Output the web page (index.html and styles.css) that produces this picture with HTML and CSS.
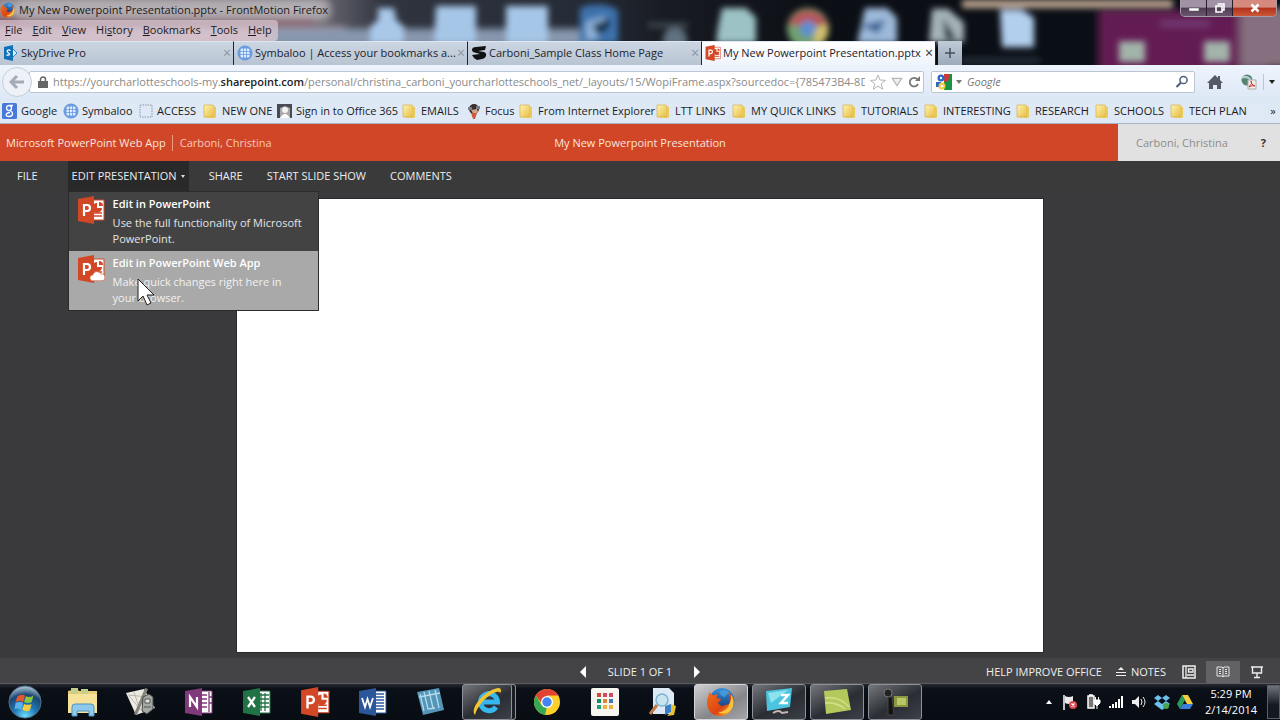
FILE: index.html
```html
<!DOCTYPE html>
<html lang="en">
<head>
<meta charset="utf-8">
<title>My New Powerpoint Presentation.pptx - FrontMotion Firefox</title>
<link rel="stylesheet" href="styles.css">
</head>
<body>
<svg class="sprite" aria-hidden="true">
  <defs>
    <linearGradient id="gFold" x1="0" y1="0" x2="1" y2="1"><stop offset="0" stop-color="#fff3ad"/><stop offset="1" stop-color="#e6bd45"/></linearGradient>
    <linearGradient id="gGlobe" x1="0" y1="0" x2="0" y2="1"><stop offset="0" stop-color="#3c8fd8"/><stop offset="1" stop-color="#0c2f6e"/></linearGradient>
    <linearGradient id="gFox" x1="0" y1="0" x2="1" y2="1"><stop offset="0" stop-color="#f2701c"/><stop offset=".6" stop-color="#dc4412"/><stop offset="1" stop-color="#ffc93a"/></linearGradient>
    <radialGradient id="gOrb" cx=".5" cy=".95" r=".9"><stop offset="0" stop-color="#6fe0ff"/><stop offset=".4" stop-color="#1f78b6"/><stop offset=".75" stop-color="#1c4670"/><stop offset="1" stop-color="#9bb8cc"/></radialGradient>
  </defs>
  <symbol id="folder" viewBox="0 0 16 16"><path d="M1 2h9l1 1v11H1z" fill="url(#gFold)" stroke="#d5b04a" stroke-width=".7"/><path d="M10.500 4H13v10l-1 1H4l-1-1h7.500z" fill="#e9c95d"/></symbol>
  <symbol id="symbaloo" viewBox="0 0 16 16"><circle cx="8" cy="8" r="7.6" fill="#6c9ce0"/><rect x="3.5" y="3.5" width="9" height="9" rx="1.500" fill="#dcebff"/><path d="M6.500 3v10M9.500 3v10M3 6.500h10M3 9.500h10" stroke="#6c9ce0" stroke-width=".8"/></symbol>
  <symbol id="firefox" viewBox="0 0 32 32"><circle cx="17" cy="14" r="13" fill="url(#gGlobe)"/><path d="M14 5c4-3 9-2 12 2l-4 1-2 3-4-2z" fill="#4aa5e2" opacity=".7"/><path d="M4 5c1 2 2 3 4 4 2-1 4-1 5-1-2 2-2 3-1 4l4 1c0 2-3 2-3 4 1 3 5 4 8 2 3 0 3-1 4-2 1-5 0-9-2-12 5 3 7 8 6 13-1 8-7 13-14 13C7 31 1 25 1 17 1 12 3 8 4 5z" fill="url(#gFox)"/><path d="M27 8c4 6 3 14-2 18-4 3-9 3-12 1 8 0 14-7 14-19z" fill="#ffc43a"/></symbol>
  <symbol id="ppt" viewBox="0 0 28 28"><path d="M15 4h12v20H15z" fill="#fff" stroke="#d24726"/><path d="M20 7v5h5a5 5 0 1 1-5-5z" fill="#d24726"/><path d="M22 6a4 4 0 0 1 4 4h-4z" fill="#d24726"/><path d="M17 17h8M17 20h8" stroke="#d24726" stroke-width="1.500"/><path d="M1 3l16-3v28L1 25z" fill="#d24726"/><path d="M7 20V9h3a3 3 0 0 1 0 6H7" fill="none" stroke="#fff" stroke-width="2.200"/></symbol>
  <symbol id="cloud" viewBox="0 0 18 12"><path d="M4 11a3 3 0 0 1 0-6 4.500 4.500 0 0 1 8.500-1A3.500 3.500 0 0 1 14 11z" fill="#fff" stroke="#d8663f" stroke-width=".7"/></symbol>
</svg>

<header class="window-top">
  <svg class="wallpaper" viewBox="0 0 1280 66" preserveAspectRatio="none" aria-hidden="true">
    <defs>
      <filter id="soft" x="-20%" y="-20%" width="140%" height="140%"><feGaussianBlur stdDeviation="4"/></filter>
      <filter id="soft2" x="-20%" y="-20%" width="140%" height="140%"><feGaussianBlur stdDeviation="3"/></filter>
      <linearGradient id="wall"><stop offset="0" stop-color="#8d7f85"/><stop offset=".24" stop-color="#77747e"/><stop offset=".3" stop-color="#30343e"/><stop offset=".46" stop-color="#242b36"/><stop offset=".52" stop-color="#191b22"/><stop offset=".64" stop-color="#0c0f15"/><stop offset="1" stop-color="#090e16"/></linearGradient>
    </defs>
    <rect width="1280" height="66" fill="url(#wall)"/>
    <g filter="url(#soft)">
      <rect x="-5" y="15" width="320" height="12" fill="#7b3a51" opacity=".65"/>
      <rect x="-5" y="27" width="350" height="18" fill="#b9a0ac"/>
      <rect x="0" y="2" width="325" height="14" fill="#aaa6a9"/>
      <rect x="270" y="29" width="320" height="18" fill="#8797ad"/>
      <rect x="1098" y="10" width="170" height="65" fill="#641d52"/>
      <rect x="1240" y="8" width="50" height="60" fill="#86707f"/>
    </g>
    <g filter="url(#soft2)">
      <path d="M378 8h16l2 12 8 8v16h-34V28l8-8z" fill="#a9c8e9"/>
      <path d="M436 6h40v38h-42z" fill="#a6c6e8"/><path d="M506 6h42v38h-42z" fill="#a6c6e8"/>
      <path d="M580 8q20-8 38 2v34h-38z" fill="#3d72ad"/><path d="M586 22l20-6-8 24h-12z" fill="#8fb4da"/><path d="M592 26l18-8v10l-12 8z" fill="#17304e"/>
      <path d="M648 23h40v5h-40z" fill="#3f4c53"/><circle cx="675" cy="40" r="12" fill="#60717f"/>
      <path d="M722 8h24l10 10v26h-40l2-16z" fill="#9cc2c6"/>
      <circle cx="808" cy="29" r="21" fill="#72a071"/><path d="M788 25a21 21 0 0 1 40 0l-20 2z" fill="#b65559"/><path d="M812 29l16-4c1 12-4 18-12 22z" fill="#d3c16a"/><circle cx="808" cy="29" r="8" fill="#5d8ed1"/>
      <path d="M865 8h22l10 10v26h-40z" fill="#9db9da"/><path d="M860 26l26-6-8 14z" fill="#3e6495"/>
      <path d="M932 9h16l16 14v20h-35z" fill="#a5b4b8"/><path d="M943 18l14 22h-12z" fill="#253642"/>
      <path d="M1000 10h22l12 8v30h-32z" fill="#b2cfee"/>
      <path d="M962 0h211v8H962z" fill="#c0a893"/>
      <path d="M1160 20h50v8h-50z" fill="#70376f"/>
      <path d="M1119 42h26v21h-26zM1204 42h26v21h-26z" fill="#a3b4aa"/>
      <path d="M960 59h80v5h-80z" fill="#2c3640"/>
    </g>
  </svg>
  <div class="title-row">
    <svg class="i16"><use href="#firefox"/></svg>
    <span class="glow">My New Powerpoint Presentation.pptx - FrontMotion Firefox</span>
    <div class="win-controls">
      <button aria-label="Minimize"><svg viewBox="0 0 16 12"><path d="M3 6h10v3H3z" fill="#fff" stroke="#555" stroke-width=".5"/></svg></button>
      <button aria-label="Restore"><svg viewBox="0 0 16 12"><path d="M5.500 2h6.500v6H10M4 4h6v6H4z" fill="none" stroke="#fff" stroke-width="1.600"/></svg></button>
      <button class="close" aria-label="Close"><svg viewBox="0 0 16 12"><path d="M4.500 2.500l7 7m0-7l-7 7" stroke="#fff" stroke-width="2.500"/></svg></button>
    </div>
  </div>
  <nav class="menu-row">
    <button><u>F</u>ile</button><button><u>E</u>dit</button><button><u>V</u>iew</button><button>Hi<u>s</u>tory</button><button><u>B</u>ookmarks</button><button><u>T</u>ools</button><button><u>H</u>elp</button>
  </nav>
  <div class="tabs" role="tablist">
    <button class="tab" role="tab"><svg class="i16" viewBox="0 0 16 16"><path d="M10 4l4 4-4 4" fill="#d9ecf8" stroke="#2b88c9"/><path d="M1 2l9-2v16l-9-2z" fill="#0f72b8"/><path d="M7.500 5.500C5 4 3 6 5 7.500s2.500 3-1.500 2.500" fill="none" stroke="#fff" stroke-width="1.300"/></svg><span>SkyDrive Pro</span><i>×</i></button>
    <button class="tab" role="tab"><svg class="i16"><use href="#symbaloo"/></svg><span>Symbaloo | Access your bookmarks a...</span><i>×</i></button>
    <button class="tab" role="tab"><svg class="i16" viewBox="0 0 16 16"><path d="M15 1L5 2C1 2 0 5 2 7l7 2-8 1 2 3 3 2 5-1c4-1 6-5 2-7L7 6l7-1z" fill="#111"/></svg><span>Carboni_Sample Class Home Page</span><i>×</i></button>
    <button class="tab active" role="tab" aria-selected="true"><svg class="i16"><use href="#ppt"/></svg><span>My New Powerpoint Presentation.pptx</span><i>×</i></button>
    <button class="new-tab" aria-label="New tab"><svg viewBox="0 0 12 12"><path d="M6 1v10M1 6h10" stroke="#44505f" stroke-width="1.500"/></svg></button>
  </div>
</header>

<div class="nav-bar">
  <button class="back" aria-label="Back"><svg viewBox="0 0 16 16"><path d="M8 2L2 8l6 6M2.500 8H15" fill="none" stroke="#a4abb4" stroke-width="3"/></svg></button>
  <div class="address">
    <svg class="lock" viewBox="0 0 10 12"><path d="M2.500 6V3.500a2.500 2.500 0 0 1 5 0V6" fill="none" stroke="#666" stroke-width="1.500"/><path d="M0 5h10v7H0z" fill="#666"/></svg>
    <div class="url" role="textbox" aria-label="Address" contenteditable="true" spellcheck="false">https://yourcharlotteschools-my.<b>sharepoint.com</b>/personal/christina_carboni_yourcharlotteschools_net/_layouts/15/WopiFrame.aspx?sourcedoc={785473B4-8DEE-47</div>
    <button aria-label="Bookmark"><svg class="i16" viewBox="0 0 16 16"><path d="M8 1l2 5 5.500.4-4.300 3.500 1.500 5.300L8 12.200l-4.700 3 1.500-5.300L.5 6.400 6 6z" fill="#fff" stroke="#b4b4b4"/></svg></button>
    <button aria-label="History"><svg viewBox="0 0 10 10"><path d="M1 2h8L5 8z" fill="#eee" stroke="#b8b8b8"/></svg></button>
    <button aria-label="Reload"><svg viewBox="0 0 12 12"><path d="M9.500 3.500A4.300 4.300 0 1 0 10 8" fill="none" stroke="#777" stroke-width="1.800"/><path d="M7 5h5V0z" fill="#777"/></svg></button>
  </div>
  <div class="search">
    <svg class="i16" viewBox="0 0 16 16"><path d="M8 0h8v16H8z" fill="#159447"/><path d="M8 0h6l-2 7-4 1z" fill="#d63632"/><circle cx="5" cy="4" r="3.500" fill="#2969c5"/><circle cx="5" cy="4" r="1.200" fill="#fff"/><path d="M0 8h5v5H0z" fill="#2969c5"/><circle cx="6" cy="12" r="3.500" fill="#f3c63d"/><circle cx="6" cy="12" r="1.500" fill="#fff"/></svg>
    <svg class="tiny" viewBox="0 0 6 4"><path d="M0 0h6L3 4z" fill="#777"/></svg>
    <input type="search" placeholder="Google" aria-label="Search with Google">
    <button aria-label="Search"><svg class="i16" viewBox="0 0 16 16"><circle cx="9.500" cy="6" r="3.600" fill="#fff" stroke="#50627a" stroke-width="1.500"/><path d="M7 8.500L2.500 13" stroke="#50627a" stroke-width="2.200"/></svg></button>
  </div>
  <button class="tool" aria-label="Home"><svg class="i16" viewBox="0 0 16 16"><path d="M8 1L0 9h2v6h4v-4h4v4h4V9h2l-3-3V2h-2v2z" fill="#535b66"/></svg></button>
  <button class="tool" aria-label="Convert page"><svg class="i16" viewBox="0 0 16 16"><circle cx="6" cy="6" r="5.500" fill="#55866d"/><path d="M1 4q4-3 9 2" stroke="#b7ccd5" stroke-width="2" fill="none"/><path d="M7 6h8v9H7z" fill="#f5efee" stroke="#aaa"/><path d="M8 13q4-4 2-6 0 4 4 5-3-1-6 1" fill="none" stroke="#c23b36"/></svg></button>
  <button class="more" aria-label="More"><svg class="tiny" viewBox="0 0 6 4"><path d="M0 0h6L3 4z" fill="#222"/></svg></button>
</div>

<nav class="bookmarks">
  <a href="#"><svg class="i16" viewBox="0 0 16 16"><rect width="15" height="16" rx="1.500" fill="#4779d9"/><circle cx="7" cy="5" r="2.500" fill="none" stroke="#fff" stroke-width="1.300"/><path d="M8 2.500h3M8 7.500c4 2 3 6-1 6s-4-3.500 1-4" fill="none" stroke="#fff" stroke-width="1.300"/></svg>Google</a>
  <a href="#"><svg class="i16"><use href="#symbaloo"/></svg>Symbaloo</a>
  <a href="#"><svg class="i16" viewBox="0 0 16 16"><path d="M2 2h12v12H2z" fill="none" stroke="#8b98a8" stroke-dasharray="1.500 1"/></svg>ACCESS</a>
  <a href="#"><svg class="i16"><use href="#folder"/></svg>NEW ONE</a>
  <a href="#"><svg class="i16" viewBox="0 0 16 16"><path d="M1 1h14v14H1z" fill="#a9a9a9"/><path d="M0 15V1h15v14h-2V5L8 3 3 5v10z" fill="#474b52"/><circle cx="8" cy="7" r="3" fill="#f2f2f2"/><path d="M3 15q5-8 10 0z" fill="#fff"/></svg>Sign in to Office 365</a>
  <a href="#"><svg class="i16"><use href="#folder"/></svg>EMAILS</a>
  <a href="#"><svg class="i16" viewBox="0 0 16 16"><circle cx="8" cy="6" r="5" fill="#39302d"/><path d="M5 7l6-1 1 3-4 3z" fill="#d4a385"/><path d="M5 10h6l-2 6H7z" fill="#cf5a39"/><path d="M2 4h4v3H2zM10 3h4v3h-4z" fill="#75818c"/></svg>Focus</a>
  <a href="#"><svg class="i16"><use href="#folder"/></svg>From Internet Explorer</a>
  <a href="#"><svg class="i16"><use href="#folder"/></svg>LTT LINKS</a>
  <a href="#"><svg class="i16"><use href="#folder"/></svg>MY QUICK LINKS</a>
  <a href="#"><svg class="i16"><use href="#folder"/></svg>TUTORIALS</a>
  <a href="#"><svg class="i16"><use href="#folder"/></svg>INTERESTING</a>
  <a href="#"><svg class="i16"><use href="#folder"/></svg>RESEARCH</a>
  <a href="#"><svg class="i16"><use href="#folder"/></svg>SCHOOLS</a>
  <a href="#"><svg class="i16"><use href="#folder"/></svg>TECH PLAN</a>
  <button aria-label="More bookmarks">»</button>
</nav>

<div class="app-bar">
  <div class="brand"><span>Microsoft PowerPoint Web App</span><a href="#">Carboni, Christina</a></div>
  <div class="doc-title">My New Powerpoint Presentation</div>
  <div class="account"><button>Carboni, Christina</button><button class="help">?</button></div>
</div>

<div class="ribbon">
  <button class="file">FILE</button>
  <div class="edit-wrap">
    <button class="edit" aria-expanded="true">EDIT PRESENTATION<svg class="caret" viewBox="0 0 4 3"><path d="M0 0h4L2 3z" fill="#ddd"/></svg></button>
    <div class="menu">
      <button class="item"><svg class="i28"><use href="#ppt"/></svg><span><strong>Edit in PowerPoint</strong>Use the full functionality of Microsoft PowerPoint.</span></button>
      <button class="item hover"><svg class="i28" viewBox="0 0 28 28"><use href="#ppt" width="28" height="28"/><use href="#cloud" x="12" y="15" width="17" height="12"/></svg><span><strong>Edit in PowerPoint Web App</strong>Make quick changes right here in your browser.</span></button>
      <svg class="cursor" viewBox="0 0 17 29" aria-hidden="true"><path d="M1 1v22l5-5 4 9 4-2-4-8h7z" fill="#fff" stroke="#222"/></svg>
    </div>
  </div>
  <button>SHARE</button>
  <button>START SLIDE SHOW</button>
  <button>COMMENTS</button>
</div>

<main class="stage"><div class="slide"></div></main>

<footer class="status">
  <div class="pager">
    <button aria-label="Previous slide"><svg viewBox="0 0 6 12"><path d="M6 0v12L0 6z" fill="#fff"/></svg></button>
    <span>SLIDE 1 OF 1</span>
    <button aria-label="Next slide"><svg viewBox="0 0 6 12"><path d="M0 0v12l6-6z" fill="#fff"/></svg></button>
  </div>
  <div class="status-tools">
    <button class="improve">HELP IMPROVE OFFICE</button>
    <button class="notes"><svg viewBox="0 0 12 12"><path d="M1 6.500h10M1 9.500h10" stroke="#eee" stroke-width="1.200"/><path d="M3 4h6L6 1z" fill="#eee"/></svg>NOTES</button>
    <button class="view" aria-label="Editing view"><svg viewBox="0 0 14 14"><path d="M1 1h12v12H1z" fill="none" stroke="#eee" stroke-width="1.500"/><path d="M4 1v12M6.500 4H11v3H6.500zM5 10h7" fill="none" stroke="#eee" stroke-width="1.300"/></svg></button>
    <button class="view on" aria-label="Reading view"><svg viewBox="0 0 14 14"><path d="M1 2h5l1 1 1-1h5v9H8l-1 1-1-1H1zM7 3v9M3 4.500h2M3 6.500h2M3 8.500h2M9 4.500h2M9 6.500h2M9 8.500h2" fill="none" stroke="#e5e5e5"/></svg></button>
    <button class="view" aria-label="Slide show"><svg viewBox="0 0 14 14"><path d="M1 2h12M2.500 2v6h9V2M7 8v4M4 12.500h6" fill="none" stroke="#eee" stroke-width="1.400"/></svg></button>
  </div>
</footer>

<div class="taskbar">
  <button class="start" aria-label="Start"><svg viewBox="0 0 36 36"><circle cx="18" cy="18" r="17" fill="url(#gOrb)" stroke="#55748a"/><path d="M10 12q4-3 8-1l-2 7q-4-2-8 0z" fill="#e4582b"/><path d="M19 12q4 2 8-1l-2 7q-4 2-8 0z" fill="#8cc63f"/><path d="M8 19q4-2 8 0l-2 7q-4-2-7 0z" fill="#5cb1ec"/><path d="M17 20q4 2 8 0l-2 7q-4 2-8-1z" fill="#f9cb3e"/></svg></button>
  <button aria-label="Explorer"><svg viewBox="0 0 32 30"><path d="M1 4l9-2 2 2h18v21H1z" fill="#e9cf77"/><path d="M4 1h7v6H4zM14 2h7v6h-7z" fill="#c4d08a"/><path d="M1 7h29v19H1z" fill="#f6e29a"/><path d="M5 29V20q0-3 3-3h16q3 0 3 3v9h-5v-5H10v5z" fill="#8cc9ec" stroke="#4d94c1"/></svg></button>
  <button aria-label="Drawing tools"><svg viewBox="0 0 32 30"><path d="M1 6l18-4 11 19-19 7z" fill="#eceae3"/><path d="M3 8l20 2M4 9l12 14M9 5l6 18" stroke="#b9b7ae"/><path d="M9 27L20 1l3 1-11 26z" fill="#85867e"/><path d="M18 10l6-3 4 3v12l-6 5-5-3z" fill="#a5a9a3" stroke="#444"/><path d="M20 12h5v4h-5zM19 20h7" fill="#dfe3de" stroke="#555"/></svg></button>
  <button aria-label="OneNote"><svg viewBox="0 0 32 30"><path d="M17 4h12v22H17z" fill="#fff" stroke="#80397b"/><path d="M26 5v20M19 8h5M19 12h5M19 16h5M19 20h5M26 10h3M26 16h3" stroke="#80397b" stroke-width="1.300"/><path d="M2 4l17-3v28L2 26z" fill="#80397b"/><path d="M7 20V10l7 10V10" fill="none" stroke="#fff" stroke-width="2.200"/></svg></button>
  <button aria-label="Excel"><svg viewBox="0 0 32 30"><path d="M17 4h12v22H17z" fill="#fff" stroke="#217346"/><path d="M20 6v18M24 6v18M18 8h10M18 12h10M18 16h10M18 20h10" stroke="#217346" stroke-width="1.300"/><path d="M2 4l17-3v28L2 26z" fill="#217346"/><path d="M7 10l7 10M14 10L7 20" fill="none" stroke="#fff" stroke-width="2.200"/></svg></button>
  <button aria-label="PowerPoint"><svg viewBox="0 0 28 28"><use href="#ppt" width="28" height="28"/></svg></button>
  <button aria-label="Word"><svg viewBox="0 0 32 30"><path d="M17 4h12v22H17z" fill="#fff" stroke="#2b579a"/><path d="M19 7h8M19 10h8M19 13h8M19 16h8M19 19h8M19 22h8" stroke="#2b579a" stroke-width="1.300"/><path d="M2 4l17-3v28L2 26z" fill="#2b579a"/><path d="M5 11l3 9 2.500-8 2.500 8 3-9" fill="none" stroke="#fff" stroke-width="1.800"/></svg></button>
  <button aria-label="Library"><svg viewBox="0 0 32 30"><path d="M2 5l22-4 5 22-21 5z" fill="#5596b8"/><path d="M5 7l4 17M9 5l4 17 7-1M14 4l4 17M20 3l4 18M4 10l21-4" fill="none" stroke="#b3dced" stroke-width="1.300"/></svg></button>
  <button class="run double" aria-label="Internet Explorer"><svg viewBox="0 0 32 30"><path d="M25 20a8.500 8.500 0 1 1 1.500-5H11" fill="none" stroke="#37b7ef" stroke-width="5"/><path d="M4 28C-2 22 14 2 28 1c3 1 2 4 1 5-1-5-20 5-25 22z" fill="#f2c530"/></svg></button>
  <button aria-label="Chrome"><svg viewBox="0 0 30 30"><circle cx="15" cy="15" r="13" fill="#fdcf2a"/><path d="M3.700 8.500A13 13 0 0 1 26.300 8.500H15l-6 7z" fill="#de4335"/><path d="M3.700 8.500l6 10L15 20l-2 7.800A13 13 0 0 1 3.700 8.500z" fill="#35a853"/><circle cx="15" cy="15" r="6" fill="#fff"/><circle cx="15" cy="15" r="4.700" fill="#4285f4"/></svg></button>
  <button aria-label="Apps"><svg viewBox="0 0 30 30"><rect x="1" y="1" width="28" height="28" rx="2" fill="#f6f5f0"/><path d="M7 6h4v4H7z" fill="#db4437"/><path d="M13 6h4v4h-4zM19 6h4v4h-4z" fill="#cf4b64"/><path d="M7 12h4v4H7z" fill="#168c63"/><path d="M13 12h4v4h-4z" fill="#e28335"/><path d="M19 12h4v4h-4z" fill="#4476b8"/><path d="M7 18h4v4H7z" fill="#24a171"/><path d="M13 18h4v4h-4zM19 18h4v4h-4z" fill="#efb33c"/></svg></button>
  <button aria-label="Search tool"><svg viewBox="0 0 32 30"><path d="M6 1h16l5 5v21H6z" fill="#dce9f6"/><circle cx="15" cy="13" r="6" fill="#c8e4ee" stroke="#7fb4cd" stroke-width="1.500"/><path d="M10 18L3 27" stroke="#be7a48" stroke-width="3"/><path d="M18 19l6-2v8l-6 3z" fill="#3d7fc4"/><path d="M24 17l5 2-2 9-7 1 4-4z" fill="#e7c233"/></svg></button>
  <button class="run current" aria-label="Firefox"><svg viewBox="0 0 32 32"><use href="#firefox" width="32" height="32"/></svg></button>
  <button class="run" aria-label="Zoom tool"><svg viewBox="0 0 32 30"><path d="M3 4l26-3-2 19-23 4z" fill="#4cc4df"/><path d="M5 6l20-3L8 16z" fill="#8ee2ee"/><path d="M18 8h7l-7 8h7" fill="none" stroke="#fff" stroke-width="2.500"/><path d="M10 26q6-4 9 0l6-1" fill="none" stroke="#c8b6b2" stroke-width="2"/></svg></button>
  <button class="run" aria-label="Notebook"><svg viewBox="0 0 32 30"><path d="M3 4l23-2 4 21-25 4z" fill="#b3c95b"/><path d="M4 11q15-2 24 9M4 16q12-1 20 6" fill="none" stroke="#d3e08c" stroke-width="1.500"/></svg></button>
  <button class="run" aria-label="Recorder"><svg viewBox="0 0 32 30"><path d="M15 9h14v11H15z" fill="#8a9844"/><path d="M18 11h9v7h-9z" fill="#bac765"/><circle cx="9" cy="6" r="4" fill="#222" stroke="#777"/><path d="M9 10h4l2 18H9z" fill="#141414" stroke="#444"/></svg></button>
  <div class="tray">
    <svg class="up" viewBox="0 0 6 4"><path d="M0 4h6L3 0z" fill="#fff"/></svg>
    <svg viewBox="0 0 16 16"><path d="M2 1v15" stroke="#fff" stroke-width="1.500"/><path d="M3 2q4 2 8 0v7q-4 2-8 0z" fill="#e8e8e8"/><circle cx="11" cy="11" r="4" fill="#d9474a"/><path d="M9.500 9.500l3 3m0-3l-3 3" stroke="#fff" stroke-width="1.300"/></svg>
    <svg viewBox="0 0 16 16"><path d="M3 2h6v12H3zM4 1h4" fill="#777" stroke="#fff" stroke-width="1.500"/><path d="M9 6h6v3l-3 3-3-3zM10.500 6V3M13.500 6V3M12 12v3" fill="#fff" stroke="#fff"/></svg>
    <svg viewBox="0 0 16 16"><path d="M1 14v-2h2v2zM4 14v-4h2v4zM7 14V8h2v6zM10 14V5h2v9zM13 14V2h2v12z" fill="#fff"/></svg>
    <svg viewBox="0 0 16 16"><path d="M1 6h3l4-4v12l-4-4H1z" fill="#eee"/><path d="M10 5q2 3 0 6M12 3q4 5 0 10" fill="none" stroke="#eee"/></svg>
    <svg viewBox="0 0 16 16"><path d="M4 1l4 3-4 3-4-3zM12 1l4 3-4 3-4-3zM4 7l4 3-4 3-4-3zM12 7l4 3-4 3-4-3zM8 10l4 3-4 3-4-3z" fill="#6cc0ed"/><circle cx="12" cy="12" r="3" fill="#48a44b"/></svg>
    <svg viewBox="0 0 16 16"><path d="M5 1h6l5 9h-6z" fill="#f3ce43"/><path d="M5 1l3 5-5 9-3-5z" fill="#279d58"/><path d="M6 10h10l-3 5H3z" fill="#397dde"/></svg>
    <time>5:29 PM<br>2/14/2014</time>
    <button class="desktop" aria-label="Show desktop"></button>
  </div>
</div>
</body>
</html>
```
FILE: styles.css
```css
* { box-sizing: border-box; }
body {
  margin: 0;
  min-height: 100vh;
  display: flex;
  flex-direction: column;
  background: #3a3a3c;
  font: 11px/16px "Open Sans", "Noto Sans", sans-serif;
  color: #1b1b1b;
}
button, input { font: inherit; color: inherit; background: none; border: 0; padding: 0; margin: 0; }
button { white-space: nowrap; }
a { color: inherit; text-decoration: none; }
svg { display: block; flex: none; }
.sprite { position: absolute; width: 0; height: 0; }
.i16 { width: 16px; height: 16px; }
.i28 { width: 28px; height: 28px; }
.tiny { width: 6px; height: 4px; }
.caret { width: 4px; height: 3px; }

/* Window frame */
.window-top { position: relative; background: #15181f; overflow: hidden; }
.wallpaper { position: absolute; inset: 0; width: 100%; height: 100%; }
.title-row, .menu-row, .tabs { position: relative; display: flex; }
.title-row { height: 20px; align-items: center; gap: 3px; }
.glow { background: rgba(190, 186, 190, .5); box-shadow: 0 0 6px 4px rgba(190, 186, 190, .5); border-radius: 6px; }
.win-controls {
  display: flex; align-self: flex-start; height: 17px; margin: 0 3px 0 auto;
  border: 1px solid #a59caa; border-top: 0; border-radius: 0 0 5px 5px; overflow: hidden;
}
.win-controls button { display: grid; place-items: center; width: 26px; background: linear-gradient(#a193a5 45%, #4f3b52 50%, #6c5770); border-right: 1px solid #2a1c2b; }
.win-controls svg { width: 16px; height: 12px; }
.win-controls .close { width: 43px; border: 0; background: linear-gradient(#d58a7d 45%, #b3301a 50%, #cb5837); }
.menu-row { height: 21px; width: max-content; align-items: center; padding: 0 6px 2px 5px; gap: 10px; background: rgba(228, 214, 224, .6); border-radius: 0 4px 4px 0; }
.tabs { height: 24px; align-items: stretch; padding-right: 318px; }
.tab {
  flex: 1 1 0; min-width: 0; display: flex; align-items: center; gap: 2px; padding: 0 2px 2px 3px; text-align: left;
  background: linear-gradient(#ccd6e3, #b9c4d2); border-right: 1px solid #1c2735; border-top: 1px solid #dfe8f2; color: #1c222b;
}
.tab span { flex: 1; min-width: 0; }
.tab i { font: 14px/16px "Open Sans", sans-serif; color: #8b95a3; }
.tab.active { background: linear-gradient(#fff, #eef4fc); }
.tab.active i { color: #333; }
.new-tab { width: 24px; margin-left: 2px; display: grid; place-items: center; background: linear-gradient(#c1cbd8, #9daab9); }
.new-tab svg { width: 12px; height: 12px; }

/* Navigation */
.nav-bar { display: flex; align-items: center; height: 35px; padding: 0 5px 2px 2px; background: linear-gradient(#eef4fc, #dde8f6); }
.back { display: grid; place-items: center; width: 30px; height: 30px; border: 1px solid #c4cdd8; border-radius: 50%; background: #eef2f8; z-index: 1; }
.back svg { width: 16px; height: 16px; }
.address, .search { display: flex; align-items: center; height: 22px; background: #fff; border: 1px solid #bcc6d2; border-radius: 2px; }
.address { flex: 1; min-width: 0; margin-left: -3px; padding: 0 3px 0 8px; gap: 5px; }
.address button svg { width: 12px; height: 12px; }
.address button .i16 { width: 16px; height: 16px; }
.lock { width: 10px; height: 12px; }
.url { flex: 1; min-width: 0; white-space: nowrap; overflow: hidden; color: #8a8a8a; outline: 0; }
.url b { color: #222; font-weight: 600; }
.search { width: 264px; margin-left: 7px; padding: 0 4px; gap: 4px; }
.search input { flex: 1; min-width: 0; outline: 0; padding-left: 1px; }
.search input::placeholder { font-style: italic; color: #777; opacity: 1; }
.tool { margin-left: 12px; }
.tool + .tool { margin-left: 18px; }
.more { margin-left: 6px; padding: 6px 0 6px 5px; border-left: 1px solid #bcc6d2; }

.bookmarks {
  display: grid; align-items: center; height: 24px; padding: 0 2px 2px; background: #dfe9f6; border-bottom: 1px solid #a9b5c4;
  grid-template-columns: 61fr 75fr 65fr 74fr 125fr 64fr 53fr 137fr 76fr 110fr 82fr 92fr 79fr 75fr 98fr 10fr;
}
.bookmarks a { display: flex; align-items: center; gap: 3px; min-width: 0; white-space: nowrap; }

/* Web app header */
.app-bar { display: grid; grid-template-columns: 1fr auto 1fr; height: 37px; background: #d04627; color: #fbe4dc; align-items: center; }
.brand { display: flex; align-items: center; padding-left: 6px; gap: 6px; }
.brand a { padding-left: 7px; border-left: 1px solid #ea9b85; color: #f9c8b9; }
.account { justify-self: end; align-self: stretch; display: flex; align-items: center; justify-content: space-between; width: 162px; padding: 0 14px 0 18px; background: #e1e1e1; color: #8c8c8c; }
.help { color: #333; font-weight: 700; }

.ribbon { display: flex; height: 30px; color: #ececec; background: #3a3a3b; }
.ribbon > button { padding: 0 12px; }
.ribbon > .file { padding: 0 30px 0 17px; }
.edit-wrap { position: relative; margin-right: 8px; }
.edit { display: flex; align-items: center; gap: 4px; height: 30px; padding: 0 4px; background: #29292a; }
.menu { position: absolute; z-index: 5; top: 30px; left: 0; width: 251px; background: #434344; border: 1px solid #2c2c2d; }
.item { display: flex; gap: 8px; width: 100%; padding: 4px 12px 4px 8px; text-align: left; white-space: normal; color: #e4e4e4; }
.item strong { display: block; margin-bottom: 3px; color: #fff; font-weight: 600; }
.item.hover { background: #a9a9a9; color: #f1f1f1; }
.cursor { position: absolute; left: 68px; top: 86px; width: 17px; height: 29px; }

.stage { flex: 1; min-height: 0; display: flex; justify-content: center; padding: 8px 0 6px; background: #3a3a3c; }
.slide { height: 453px; aspect-ratio: 16 / 9; background: #fff; box-shadow: 0 0 0 1px #29292b; }

.status { display: grid; grid-template-columns: 1fr auto 1fr; height: 26px; align-items: center; padding-top: 3px; color: #eee; background: #444446; border-bottom: 1px solid #5b5b5e; }
.pager { grid-column: 2; display: flex; align-items: center; gap: 22px; }
.pager svg { width: 6px; height: 12px; }
.status-tools { justify-self: end; display: flex; align-items: center; align-self: stretch; padding-right: 6px; }
.notes { display: flex; align-items: center; gap: 4px; margin: 0 6px 0 13px; }
.notes svg { width: 12px; height: 12px; }
.view { display: grid; place-items: center; width: 34px; align-self: stretch; }
.view svg { width: 14px; height: 14px; }
.view.on { background: #626264; }

/* Taskbar */
.taskbar { display: flex; height: 36px; background: linear-gradient(#252a33, #0b0f17 5px, #080c13); }
.taskbar > button { display: grid; place-items: center; width: 54px; margin: 0 2px; border: 1px solid transparent; border-radius: 3px; }
.taskbar > button svg { width: 32px; height: 30px; }
.taskbar > .start { width: 49px; margin: 0 5px 0 0; }
.taskbar > .start svg { width: 36px; height: 34px; }
.taskbar > .run { border-color: #8e9197; background: linear-gradient(150deg, #74767b, #2a2d33 55%, #3c4047); }
.taskbar > .double { width: 50px; margin-right: 6px; box-shadow: 4px 0 0 -1px #1a1d22, 4px 0 0 0 #8e9197; }
.taskbar > .current { border-color: #d5d5d7; background: linear-gradient(150deg, #d0d0d2, #85868a 60%, #a5a6a9); }
.tray { display: flex; align-items: center; margin-left: auto; gap: 7px; color: #fff; }
.tray svg { width: 16px; height: 16px; }
.tray .up { width: 6px; height: 4px; margin-right: 3px; }
.tray time { text-align: center; width: 58px; margin-left: 2px; }
.desktop { width: 13px; height: 34px; background: linear-gradient(#6f747c, #14181f 60%); border: 1px solid #5a5f68; }
```
